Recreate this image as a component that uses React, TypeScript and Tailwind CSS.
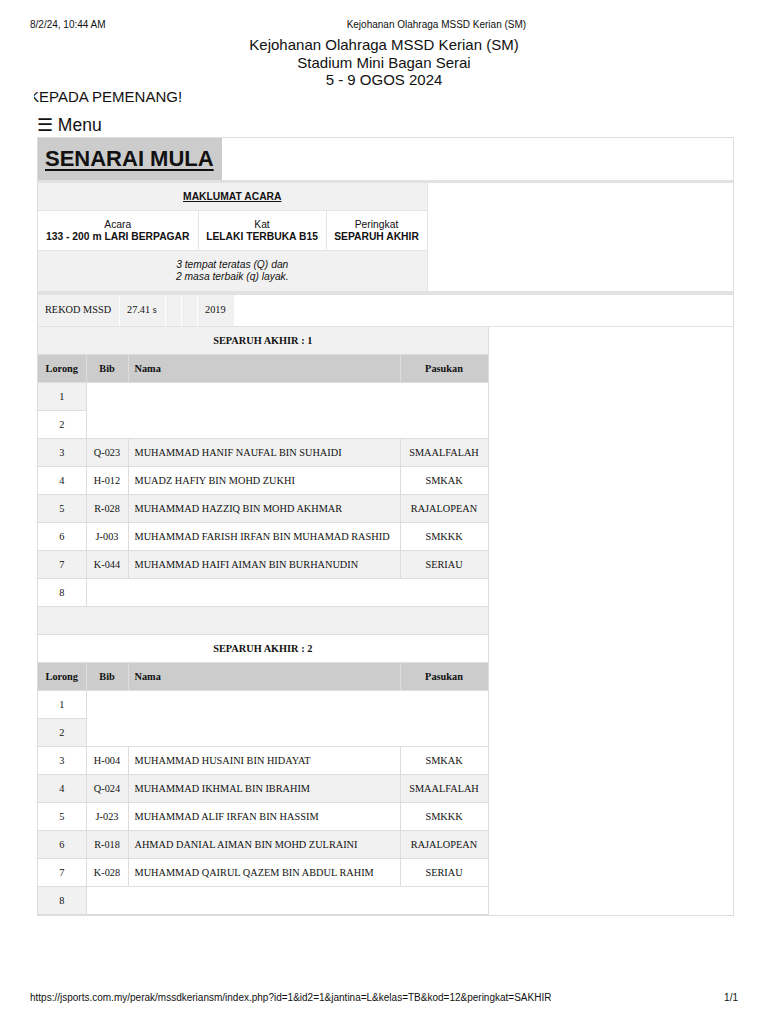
type Runner = { lane: number; bib: string; name: string; team: string };

const heat1: Runner[] = [
  { lane: 3, bib: "Q-023", name: "MUHAMMAD HANIF NAUFAL BIN SUHAIDI", team: "SMAALFALAH" },
  { lane: 4, bib: "H-012", name: "MUADZ HAFIY BIN MOHD ZUKHI", team: "SMKAK" },
  { lane: 5, bib: "R-028", name: "MUHAMMAD HAZZIQ BIN MOHD AKHMAR", team: "RAJALOPEAN" },
  { lane: 6, bib: "J-003", name: "MUHAMMAD FARISH IRFAN BIN MUHAMAD RASHID", team: "SMKKK" },
  { lane: 7, bib: "K-044", name: "MUHAMMAD HAIFI AIMAN BIN BURHANUDIN", team: "SERIAU" },
];

const heat2: Runner[] = [
  { lane: 3, bib: "H-004", name: "MUHAMMAD HUSAINI BIN HIDAYAT", team: "SMKAK" },
  { lane: 4, bib: "Q-024", name: "MUHAMMAD IKHMAL BIN IBRAHIM", team: "SMAALFALAH" },
  { lane: 5, bib: "J-023", name: "MUHAMMAD ALIF IRFAN BIN HASSIM", team: "SMKKK" },
  { lane: 6, bib: "R-018", name: "AHMAD DANIAL AIMAN BIN MOHD ZULRAINI", team: "RAJALOPEAN" },
  { lane: 7, bib: "K-028", name: "MUHAMMAD QAIRUL QAZEM BIN ABDUL RAHIM", team: "SERIAU" },
];

const cell = "h-[28px] border-r border-b border-[#ddd] p-0 align-middle";

function Heat({ title, runners, firstGray, titleGray }: { title: string; runners: Runner[]; firstGray: boolean; titleGray: boolean }) {
  // stripe flips each row, lane 1 starts with firstGray
  const bg = (lane: number) => ((lane % 2 === 1) === firstGray ? "bg-[#f1f1f1]" : "bg-white");
  return (
    <>
      <tr className={titleGray ? "bg-[#f1f1f1]" : "bg-white"}>
        <td colSpan={4} className={`${cell} text-center font-bold`}>
          {title}
        </td>
      </tr>
      <tr className="bg-[#ccc] font-bold">
        <td className={`${cell} text-center`}>Lorong</td>
        <td className={`${cell} text-center`}>Bib</td>
        <td className={`${cell} pl-[6px] text-left`}>Nama</td>
        <td className={`${cell} text-center`}>Pasukan</td>
      </tr>
      <tr className={bg(1)}>
        <td className={`${cell} text-center`}>1</td>
        <td colSpan={3} rowSpan={2} className={`${cell} bg-white`} />
      </tr>
      <tr className={bg(2)}>
        <td className={`${cell} text-center`}>2</td>
      </tr>
      {runners.map((r) => (
        <tr key={r.lane} className={bg(r.lane)}>
          <td className={`${cell} text-center`}>{r.lane}</td>
          <td className={`${cell} text-center`}>{r.bib}</td>
          <td className={`${cell} pl-[6px] whitespace-nowrap`}>{r.name}</td>
          <td className={`${cell} text-center`}>{r.team}</td>
        </tr>
      ))}
      <tr className={bg(8)}>
        <td className={`${cell} text-center`}>8</td>
        <td colSpan={3} className={`${cell} bg-white`} />
      </tr>
    </>
  );
}

export default function App() {
  return (
    <div className="flex min-h-[1024px] w-[768px] flex-col bg-white font-['Liberation_Sans',Arial,sans-serif] text-[#111]">
      <div className="flex pl-[30px] pt-[19px] text-[10px] leading-[12px]">
        <span>8/2/24, 10:44 AM</span>
        <span className="ml-[241px]">Kejohanan Olahraga MSSD Kerian (SM)</span>
      </div>

      <div className="mt-[5px] text-center text-[15px] leading-[17.5px]">
        <div>Kejohanan Olahraga MSSD Kerian (SM)</div>
        <div>Stadium Mini Bagan Serai</div>
        <div>5 - 9 OGOS 2024</div>
      </div>

      <div className="ml-[34px] w-[400px] overflow-hidden whitespace-nowrap text-[15px] leading-[16px]">
        <div className="-ml-[5px]">KEPADA PEMENANG!</div>
      </div>

      <div className="ml-[37px] mt-[8px] text-[17.5px] leading-[24px]">☰ Menu</div>

      <div className="ml-[37px] w-[697px] border border-[#ddd]">
        <div className="border-b-[3px] border-[#e2e2e2]">
          <div className="flex h-[42px] w-[184px] items-center bg-[#ccc] pl-[7px]">
            <h2 className="text-[22px] font-bold leading-none underline decoration-2 underline-offset-[3px]">
              SENARAI MULA
            </h2>
          </div>
        </div>

        <div className="border-b-4 border-[#e2e2e2]">
          <table className="w-[389px] table-fixed border-collapse text-[10.3px] leading-[11.5px]">
            <colgroup>
              <col className="w-[160px]" />
              <col className="w-[128px]" />
              <col className="w-[101px]" />
            </colgroup>
            <tbody>
              <tr className="bg-[#f1f1f1]">
                <td colSpan={3} className="h-[28px] border-r border-b border-[#e4e4e4] text-center font-bold underline">
                  MAKLUMAT ACARA
                </td>
              </tr>
              <tr className="bg-white">
                <td className="h-[40px] border-r border-b border-[#e4e4e4] text-center">
                  <div>Acara</div>
                  <div className="font-bold">133 - 200 m LARI BERPAGAR</div>
                </td>
                <td className="h-[40px] border-r border-b border-[#e4e4e4] text-center">
                  <div>Kat</div>
                  <div className="font-bold">LELAKI TERBUKA B15</div>
                </td>
                <td className="h-[40px] border-r border-b border-[#e4e4e4] text-center">
                  <div>Peringkat</div>
                  <div className="font-bold">SEPARUH AKHIR</div>
                </td>
              </tr>
              <tr className="bg-[#f1f1f1]">
                <td colSpan={3} className="h-[40px] border-r border-[#e4e4e4] text-center italic">
                  <div>3 tempat teratas (Q) dan</div>
                  <div>2 masa terbaik (q) layak.</div>
                </td>
              </tr>
            </tbody>
          </table>
        </div>

        <div className="border-b border-[#e2e2e2]">
          <div className="flex h-[31px] font-['Liberation_Serif','Times_New_Roman',serif] text-[10.3px]">
            <div className="flex w-[82px] items-center border-r border-white bg-[#f1f1f1] pl-[7px]">REKOD MSSD</div>
            <div className="flex w-[46px] items-center border-r border-white bg-[#f1f1f1] pl-[7px]">27.41 s</div>
            <div className="w-[16px] border-r border-white bg-[#f1f1f1]" />
            <div className="w-[16px] border-r border-white bg-[#f1f1f1]" />
            <div className="flex w-[36px] items-center bg-[#f1f1f1] pl-[7px]">2019</div>
          </div>
        </div>

        <table className="w-[450px] table-fixed border-collapse font-['Liberation_Serif','Times_New_Roman',serif] text-[10.3px]">
          <colgroup>
            <col className="w-[48px]" />
            <col className="w-[42px]" />
            <col className="w-[272px]" />
            <col className="w-[88px]" />
          </colgroup>
          <tbody>
            <Heat title="SEPARUH AKHIR : 1" runners={heat1} firstGray={true} titleGray={true} />
            <tr className="bg-[#f1f1f1]">
              <td colSpan={4} className={cell} />
            </tr>
            <Heat title="SEPARUH AKHIR : 2" runners={heat2} firstGray={false} titleGray={false} />
          </tbody>
        </table>
      </div>

      <div className="mt-auto flex justify-between pb-[20px] pl-[30px] pr-[30px] text-[10px] leading-[12px]">
        <span>https://jsports.com.my/perak/mssdkeriansm/index.php?id=1&amp;id2=1&amp;jantina=L&amp;kelas=TB&amp;kod=12&amp;peringkat=SAKHIR</span>
        <span>1/1</span>
      </div>
    </div>
  );
}
